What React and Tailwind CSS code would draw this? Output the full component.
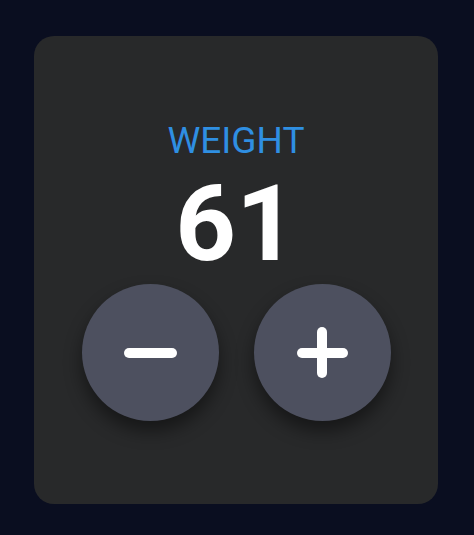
import React, { useState } from "react";

function RoundButton({ children, onClick }) {
  return (
    <button
      onClick={onClick}
      className="w-[137px] h-[137px] rounded-full bg-[#4d505f] flex items-center justify-center shadow-[0_10px_18px_rgba(0,0,0,0.45)]"
    >
      {children}
    </button>
  );
}

export default function App() {
  const [weight, setWeight] = useState(61);

  return (
    <div className="w-[474px] h-[535px] bg-[#0a0e20] pt-[36px] pl-[34px]" style={{ fontFamily: "Roboto, sans-serif" }}>
      <div className="w-[404px] h-[468px] rounded-[20px] bg-[#28292a] flex flex-col items-center pt-[86px]">
        <div className="text-[37px] leading-none text-[#2f8fe2] tracking-[0px]">WEIGHT</div>
        <div className="mt-[12px] text-[106px] leading-none font-bold text-white">{weight}</div>
        <div className="mt-[7px] flex gap-[35px]">
          <RoundButton onClick={() => setWeight(weight - 1)}>
            <span className="block w-[53px] h-[10px] rounded-full bg-white" />
          </RoundButton>
          <RoundButton onClick={() => setWeight(weight + 1)}>
            <span className="relative block w-[51px] h-[51px]">
              <span className="absolute left-0 top-[20.5px] w-[51px] h-[10px] rounded-full bg-white" />
              <span className="absolute top-0 left-[20.5px] w-[10px] h-[51px] rounded-full bg-white" />
            </span>
          </RoundButton>
        </div>
      </div>
    </div>
  );
}
